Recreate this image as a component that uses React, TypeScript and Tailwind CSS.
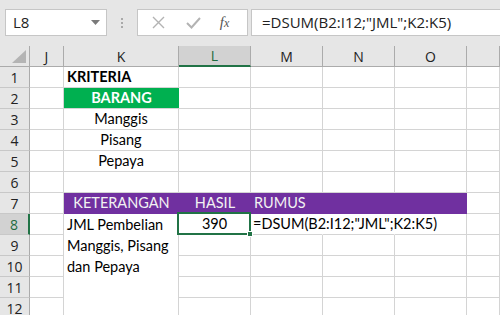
import React from "react";

const ROWS = [1, 2, 3, 4, 5, 6, 7, 8, 9, 10, 11, 12];
const COLS = ["J", "K", "L", "M", "N", "O", ""];

const cell = "bg-white border-r border-b border-[#d4d4d4] flex items-center text-[14.5px] leading-none text-black";

const TopBar = () => (
  <div className="h-[46px] flex items-start pt-[9px] pl-[5px]">
    <div className="w-[102px] h-[27px] bg-white border border-[#c6c6c6] flex items-center justify-between pl-[7px] pr-[6px]">
      <span className="font-['Open_Sans'] text-[15px] text-[#222]">L8</span>
      <svg width="9" height="5" viewBox="0 0 9 5">
        <path d="M0 0h9L4.5 5z" fill="#7a7a7a" />
      </svg>
    </div>
    <div className="w-[30px] h-[27px] flex flex-col items-center justify-center gap-[2px]">
      <span className="w-[2px] h-[2px] bg-[#a9a9a9]" />
      <span className="w-[2px] h-[2px] bg-[#a9a9a9]" />
      <span className="w-[2px] h-[2px] bg-[#a9a9a9]" />
    </div>
    <div className="w-[111px] h-[27px] bg-white border border-[#c6c6c6] flex items-center">
      <div className="w-[40px] flex justify-center">
        <svg width="13" height="13" viewBox="0 0 13 13">
          <path d="M1 1l11 11M12 1L1 12" stroke="#b3b3b3" strokeWidth="1.4" />
        </svg>
      </div>
      <div className="w-[30px] flex justify-center">
        <svg width="15" height="12" viewBox="0 0 15 12">
          <path d="M1 6l4.5 4.5L14 1" stroke="#b3b3b3" strokeWidth="2" fill="none" />
        </svg>
      </div>
      <div className="flex-1 flex justify-center pr-[6px]">
        <span className="font-['Liberation_Serif'] italic text-[15px] text-[#555]">
          f<span className="text-[12px]">x</span>
        </span>
      </div>
    </div>
    <div className="ml-[3px] flex-1 h-[27px] bg-white border border-r-0 border-[#c6c6c6] flex items-center pl-[10px]">
      <span className="font-['Open_Sans'] text-[15px] text-[#222] whitespace-nowrap">
        =DSUM(B2:I12;"JML";K2:K5)
      </span>
    </div>
  </div>
);

const HeaderRow = () => (
  <>
    <div className="bg-[#e6e6e6] border-r border-b border-[#ababab] flex items-end justify-end pr-[3px] pb-[3px]">
      <svg width="14" height="13" viewBox="0 0 14 13">
        <path d="M14 0v13H0z" fill="#b4b4b4" />
      </svg>
    </div>
    {COLS.map((c, i) =>
      c === "L" ? (
        <div
          key={i}
          className="bg-[#d2d2d2] border-r border-[#ababab] border-b-2 border-b-[#217346] flex items-center justify-center font-['Open_Sans'] text-[14px] text-[#1e6b3f]"
        >
          {c}
        </div>
      ) : (
        <div
          key={i}
          className="bg-[#e6e6e6] border-r border-b border-[#ababab] flex items-center justify-center font-['Open_Sans'] text-[14px] text-[#222]"
        >
          {c}
        </div>
      )
    )}
  </>
);

const RowHead = ({ n }: { n: number }) =>
  n === 8 ? (
    <div className="bg-[#d2d2d2] border-b border-[#c8c8c8] border-r-2 border-r-[#217346] flex items-center justify-center font-['Open_Sans'] text-[14px] text-[#1e6b3f]">
      {n}
    </div>
  ) : (
    <div className="bg-[#e6e6e6] border-b border-[#c8c8c8] border-r border-r-[#ababab] flex items-center justify-center font-['Open_Sans'] text-[14px] text-[#222]">
      {n}
    </div>
  );

const Row = ({ n }: { n: number }) => {
  if (n === 7) {
    return (
      <>
        <RowHead n={n} />
        <div className={cell} />
        <div className="bg-[#7030a0] flex items-center justify-center text-[14.5px] leading-none text-[#f2f2f2]">KETERANGAN</div>
        <div className="bg-[#7030a0] flex items-center justify-center text-[14.5px] leading-none text-[#f2f2f2]">HASIL</div>
        <div className="bg-[#7030a0] flex items-center pl-[3px] text-[14.5px] leading-none text-[#f2f2f2]">RUMUS</div>
        <div className="bg-[#7030a0]" />
        <div className="bg-[#7030a0]" />
        <div className={cell} />
      </>
    );
  }
  if (n === 8) {
    return (
      <>
        <RowHead n={n} />
        <div className={cell} />
        <div className="row-span-5 bg-white border-r border-[#d4d4d4] pl-[3px] text-[14.5px] leading-[21px] text-black">
          JML Pembelian
          <br />
          Manggis, Pisang
          <br />
          dan Pepaya
        </div>
        <div className={`${cell} justify-center relative z-20`}>
          390
          <div className="absolute -top-[2px] -left-[2px] -right-[1px] -bottom-[1px] border-2 border-[#217346]" />
          <div className="absolute -right-[3px] -bottom-[3px] w-[6px] h-[6px] bg-[#217346] border border-white" />
        </div>
        <div className={`${cell} border-r-white pl-[2px] whitespace-nowrap overflow-visible relative z-10`}>
          =DSUM(B2:I12;"JML";K2:K5)
        </div>
        <div className={`${cell} border-r-white`} />
        <div className={cell} />
        <div className={cell} />
      </>
    );
  }
  const k =
    n === 1 ? (
      <div className={`${cell} pl-[3px] font-bold`}>KRITERIA</div>
    ) : n === 2 ? (
      <div className="bg-[#00b050] border-b border-[#d4d4d4] flex items-center justify-center text-[14.5px] leading-none font-bold text-white">
        BARANG
      </div>
    ) : n >= 3 && n <= 5 ? (
      <div className={`${cell} justify-center`}>{["Manggis", "Pisang", "Pepaya"][n - 3]}</div>
    ) : n <= 6 ? (
      <div className={cell} />
    ) : null;
  return (
    <>
      <RowHead n={n} />
      <div className={cell} />
      {k}
      <div className={cell} />
      <div className={cell} />
      <div className={cell} />
      <div className={cell} />
      <div className={cell} />
    </>
  );
};

export default function App() {
  return (
    <div className="w-[500px] h-[315px] overflow-hidden bg-[#e6e6e6] font-['Lato']">
      <TopBar />
      <div className="grid grid-cols-[30px_34px_115px_72px_72px_72px_72px_1fr] grid-rows-[repeat(13,21px)]">
        <HeaderRow />
        {ROWS.map((n) => (
          <Row key={n} n={n} />
        ))}
      </div>
    </div>
  );
}
